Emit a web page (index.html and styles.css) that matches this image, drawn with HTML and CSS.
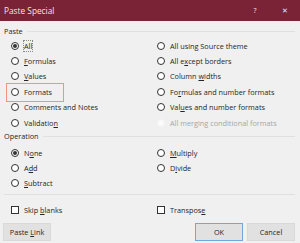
FILE: index.html
```html
<!DOCTYPE html>
<html lang="en">
<head>
    <meta charset="UTF-8">
    <title>Paste Special</title>
    <link rel="stylesheet" href="styles.css">
</head>
<body>
    <div class="dialog">
        <div class="titlebar">
            <span class="title">Paste Special</span>
            <span class="help">?</span>
            <span class="close">&#x2715;</span>
        </div>

        <div class="heading"><span>Paste</span><i class="line"></i></div>
        <div class="options">
            <label class="opt"><span class="radio checked"></span><span class="focus">All</span></label>
            <label class="opt"><span class="radio"></span><span>All using Source theme</span></label>
            <label class="opt"><span class="radio"></span><span><u>F</u>ormulas</span></label>
            <label class="opt"><span class="radio"></span><span>All e<u>x</u>cept borders</span></label>
            <label class="opt"><span class="radio"></span><span><u>V</u>alues</span></label>
            <label class="opt"><span class="radio"></span><span>Column <u>w</u>idths</span></label>
            <label class="opt highlight"><span class="radio"></span><span>Formats</span></label>
            <label class="opt"><span class="radio"></span><span>Fo<u>r</u>mulas and number formats</span></label>
            <label class="opt"><span class="radio"></span><span>Comments and Notes</span></label>
            <label class="opt"><span class="radio"></span><span>Val<u>u</u>es and number formats</span></label>
            <label class="opt"><span class="radio"></span><span>Validatio<u>n</u></span></label>
            <label class="opt disabled"><span class="radio"></span><span>All mer<u>g</u>ing conditional formats</span></label>
        </div>

        <div class="heading op"><span>Operation</span><i class="line"></i></div>
        <div class="options">
            <label class="opt"><span class="radio checked"></span><span>N<u>o</u>ne</span></label>
            <label class="opt"><span class="radio"></span><span><u>M</u>ultiply</span></label>
            <label class="opt"><span class="radio"></span><span>A<u>d</u>d</span></label>
            <label class="opt"><span class="radio"></span><span>D<u>i</u>vide</span></label>
            <label class="opt"><span class="radio"></span><span><u>S</u>ubtract</span></label>
        </div>

        <div class="separator"></div>

        <div class="options checks">
            <label class="opt"><span class="check"></span><span>Skip <u>b</u>lanks</span></label>
            <label class="opt"><span class="check"></span><span>Transpos<u>e</u></span></label>
        </div>

        <div class="buttons">
            <button class="btn">Paste <u>L</u>ink</button>
            <span class="spacer"></span>
            <button class="btn default">OK</button>
            <button class="btn">Cancel</button>
        </div>
    </div>
</body>
</html>
```

FILE: styles.css
```css
* {
    margin: 0;
    padding: 0;
    box-sizing: border-box;
}

body {
    font-family: 'Open Sans', 'Noto Sans', sans-serif;
    font-size: 7.3px;
    color: #262626;
    background-color: #f0f0f0;
    width: 300px;
    height: 243px;
    overflow: hidden;
}

u {
    text-decoration-thickness: 0.5px;
    text-underline-offset: 1px;
}

.titlebar {
    height: 21px;
    background-color: #7a2236;
    color: #f3e4e7;
    display: flex;
    align-items: center;
    padding-left: 4px;
    font-size: 8.3px;
}

.title {
    flex: 1;
}

.help {
    width: 30px;
    text-align: center;
    font-size: 7px;
}

.close {
    width: 30px;
    text-align: center;
    font-size: 7px;
}

.heading {
    display: flex;
    align-items: center;
    height: 14px;
    margin-top: 3px;
    padding: 0 5px 0 4px;
}

.heading.op {
    height: 12px;
    margin-top: 0;
    margin-bottom: 2.6px;
}

.line {
    flex: 1;
    height: 1px;
    background-color: #e0e0e0;
    margin-left: 4px;
}

.options {
    display: grid;
    grid-template-columns: 146px 1fr;
    padding-left: 11px;
}

.opt {
    height: 15.4px;
    display: flex;
    align-items: center;
    gap: 5px;
    white-space: nowrap;
}

.radio {
    width: 8px;
    height: 8px;
    border: 1px solid #333;
    border-radius: 50%;
    background-color: #fff;
    display: flex;
    align-items: center;
    justify-content: center;
    flex-shrink: 0;
}

.radio.checked::after {
    content: "";
    width: 4px;
    height: 4px;
    border-radius: 50%;
    background-color: #333;
}

.focus {
    outline: 1px dotted #888;
    outline-offset: 0;
}

.highlight {
    position: relative;
}

.highlight::after {
    content: "";
    position: absolute;
    left: -5px;
    top: -1.5px;
    width: 56px;
    height: 17px;
    border: 1.5px solid #f39382;
}

.disabled {
    color: #a6a6a6;
}

.disabled .radio {
    border-color: #f4f4f4;
    background-color: #fbfbfb;
}

.separator {
    height: 1px;
    background-color: #e0e0e0;
    margin: 2.5px 5px 0 4px;
}

.checks {
    margin-top: 7.5px;
}

.checks .opt {
    height: 15px;
}

.check {
    width: 8px;
    height: 8px;
    border: 1px solid #333;
    background-color: #fff;
    flex-shrink: 0;
}

.buttons {
    display: flex;
    gap: 4px;
    padding: 5.5px 5px 0 3px;
}

.spacer {
    flex: 1;
}

.btn {
    font-family: inherit;
    font-size: 7.3px;
    color: #262626;
    width: 48px;
    height: 18px;
    background-color: #e1e1e1;
    border: 1px solid #d9d9d9;
}

.btn.default {
    border-color: #6fa8dc;
}
```
